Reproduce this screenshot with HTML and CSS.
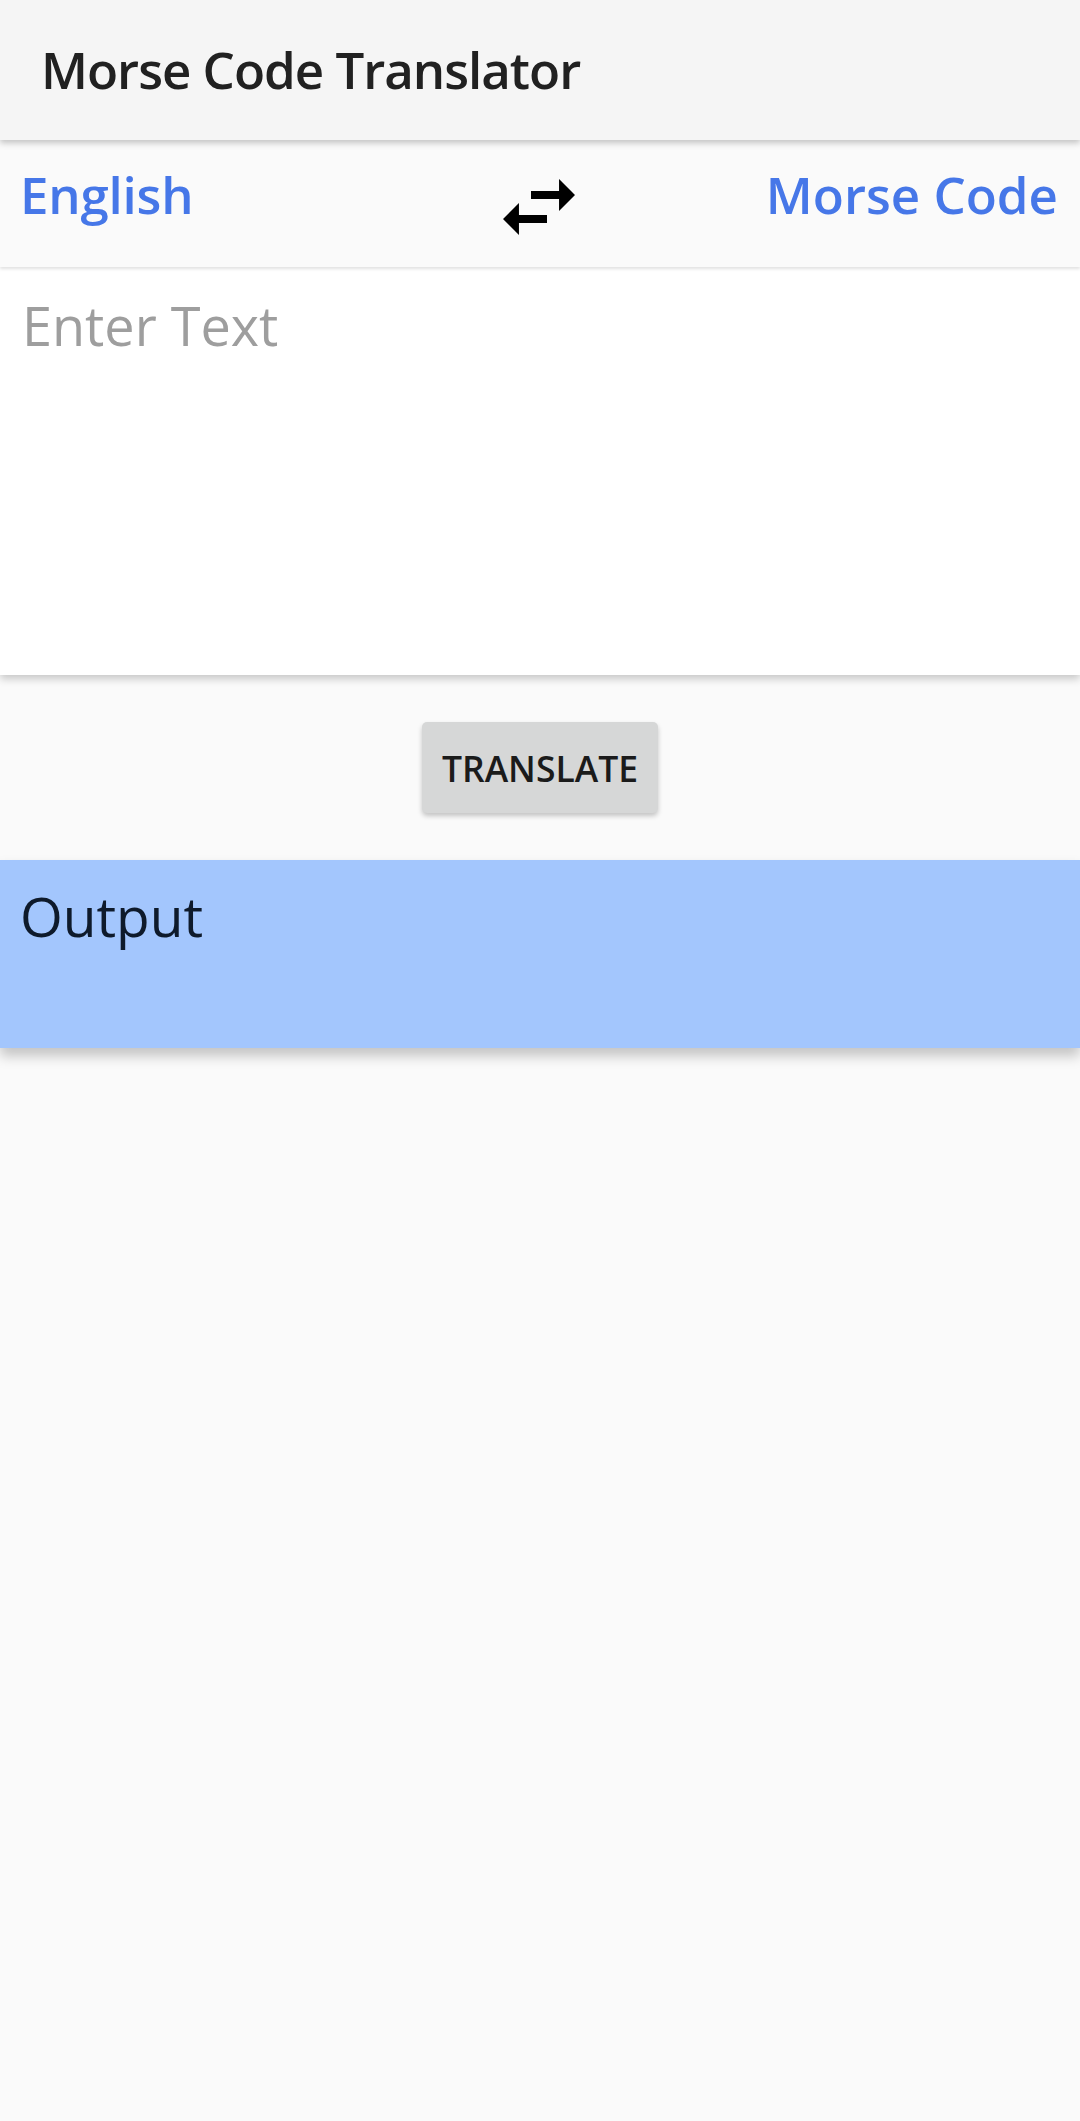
FILE: index.html
```html
<!DOCTYPE html>
<html lang="en">
<head>
<meta charset="utf-8">
<title>Morse Code Translator</title>
<link rel="stylesheet" href="styles.css">
</head>
<body>
<header class="toolbar">
  <h1 class="title">Morse Code Translator</h1>
</header>
<div class="lang-bar">
  <span class="lang lang-from">English</span>
  <svg class="swap" viewBox="0 0 24 24" width="96" height="96" aria-hidden="true">
    <path d="M6.99 11L3 15l3.99 4v-3H14v-2H6.99v-3zM21 9l-3.99-4v3H10v2h7.01v3L21 9z" fill="#000"/>
  </svg>
  <span class="lang lang-to">Morse Code</span>
</div>
<div class="input-card">
  <div class="placeholder">Enter Text</div>
</div>
<div class="actions">
  <button class="translate-btn" type="button">TRANSLATE</button>
</div>
<div class="output-card">
  <div class="output-text">Output</div>
</div>
</body>
</html>
```

FILE: styles.css
```css
html, body {
  margin: 0;
  padding: 0;
}
body {
  background: #fafafa;
  font-family: "Open Sans", "Noto Sans", sans-serif;
  width: 1080px;
  min-height: 2121px;
  overflow: hidden;
}
.toolbar {
  height: 140px;
  background: #f5f5f5;
  display: flex;
  align-items: center;
  padding-left: 41px;
  box-shadow: 0 3px 6px rgba(0, 0, 0, 0.22);
  position: relative;
  z-index: 2;
}
.title {
  margin: 0 0 2px 0;
  font-size: 51px;
  font-weight: 600;
  color: #212121;
  letter-spacing: -1px;
}
.lang-bar {
  height: 127px;
  background: #fafafa;
  display: grid;
  grid-template-columns: 1fr 96px 1fr;
  align-items: center;
  padding: 0 22px 0 20px;
  position: relative;
  z-index: 1;
  box-shadow: 0 2px 3px rgba(0, 0, 0, 0.12);
}
.lang {
  font-size: 51px;
  font-weight: 600;
  color: #4677e8;
  letter-spacing: -0.2px;
  margin-bottom: 20px;
}
.lang-to {
  justify-self: end;
  letter-spacing: 0;
}
.swap {
  display: block;
  margin-top: 7px;
}
.input-card {
  height: 408px;
  background: #ffffff;
  box-shadow: 0 4px 8px rgba(0, 0, 0, 0.2);
  position: relative;
}
.placeholder {
  padding: 18px 0 0 22px;
  font-size: 54px;
  color: #9e9e9e;
  line-height: 80px;
}
.actions {
  display: flex;
  justify-content: center;
  padding-top: 47px;
  height: 138px;
}
.translate-btn {
  width: 236px;
  height: 91px;
  background: #d6d7d7;
  border: none;
  border-radius: 5px;
  box-shadow: 0 3px 5px rgba(0, 0, 0, 0.22);
  font-family: "Open Sans", "Noto Sans", sans-serif;
  font-size: 35.5px;
  font-weight: 600;
  color: #1b1b1b;
  padding: 0;
}
.output-card {
  height: 188px;
  background: #a3c6fd;
  box-shadow: 0 8px 12px rgba(0, 0, 0, 0.22);
}
.output-text {
  padding: 16px 0 0 20px;
  font-size: 55px;
  color: #0e1a2b;
  line-height: 80px;
}
```
